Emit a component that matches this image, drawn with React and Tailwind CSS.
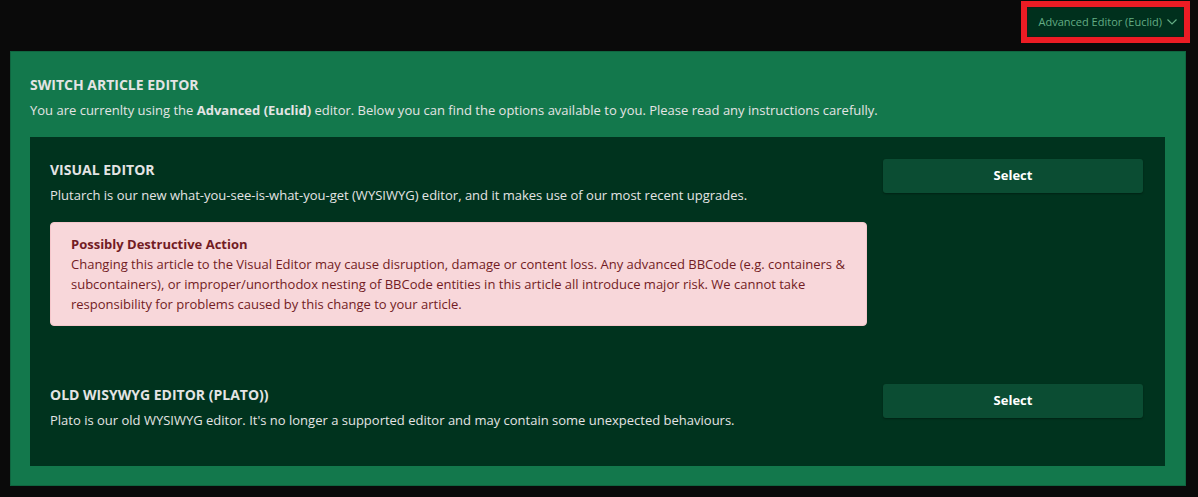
function EditorOption({ title, description, children }) {
  return (
    <div className="flex items-start gap-4">
      <div className="flex-1 pt-[2px]">
        <h3 className="text-[14px] font-bold uppercase leading-5 text-[#e4e4e4]">{title}</h3>
        <p className="mt-[5px] text-[13px] leading-5 text-[#e4e4e4]">{description}</p>
        {children}
      </div>
      <button
        type="button"
        className="mt-[1px] h-[34px] w-[260px] shrink-0 rounded-[3px] bg-[#0b4d33] text-[13px] font-bold text-white shadow-[0_1px_2px_rgba(0,0,0,0.35)]"
      >
        Select
      </button>
    </div>
  );
}

export default function App() {
  return (
    <div className="min-h-[497px] bg-[#0a0a0a] font-['Open_Sans',sans-serif]">
      <div className="flex justify-end pt-[1px] pr-[8px]">
        <div className="border-[6px] border-[#ec1c24]">
          <button
            type="button"
            className="flex h-[30px] items-center gap-[5px] border border-[#0d2419] bg-[#00301d] pr-[6px] pl-[11px] text-[11px] text-[#63ad84]"
          >
            Advanced Editor (Euclid)
            <svg width="10" height="6" viewBox="0 0 10 6" fill="none" stroke="currentColor" strokeWidth="1.2">
              <path d="M0.5 0.5L5 5L9.5 0.5" />
            </svg>
          </button>
        </div>
      </div>

      <div className="mt-[8px] mr-[12px] ml-[10px] border border-[#0f6640] bg-[#13784c] pt-[23px] pr-[20px] pb-[19px] pl-[19px]">
        <h2 className="text-[14px] font-bold uppercase leading-5 text-[#e4e4e4]">Switch Article Editor</h2>
        <p className="mt-[5px] text-[13px] leading-5 text-[#e4e4e4]">
          You are currenlty using the <strong>Advanced (Euclid)</strong> editor. Below you can find the options
          available to you. Please read any instructions carefully.
        </p>

        <div className="mt-[17px] bg-[#00331e] pt-[21px] pr-[22px] pb-[36px] pl-[20px]">
          <EditorOption
            title="Visual Editor"
            description="Plutarch is our new what-you-see-is-what-you-get (WYSIWYG) editor, and it makes use of our most recent upgrades."
          >
            <div className="mt-[17px] rounded-[4px] border border-[#f5c6cb] bg-[#f8d7da] px-[20px] py-[11px] text-[13px] leading-5 text-[#721c24]">
              <p className="font-bold">Possibly Destructive Action</p>
              <p>
                Changing this article to the Visual Editor may cause disruption, damage or content loss. Any advanced
                BBCode (e.g. containers &amp; subcontainers), or improper/unorthodox nesting of BBCode entities in this
                article all introduce major risk. We cannot take responsibility for problems caused by this change to
                your article.
              </p>
            </div>
          </EditorOption>

          <div className="mt-[57px]">
            <EditorOption
              title="Old WISYWYG Editor (Plato))"
              description="Plato is our old WYSIWYG editor. It's no longer a supported editor and may contain some unexpected behaviours."
            />
          </div>
        </div>
      </div>
    </div>
  );
}
